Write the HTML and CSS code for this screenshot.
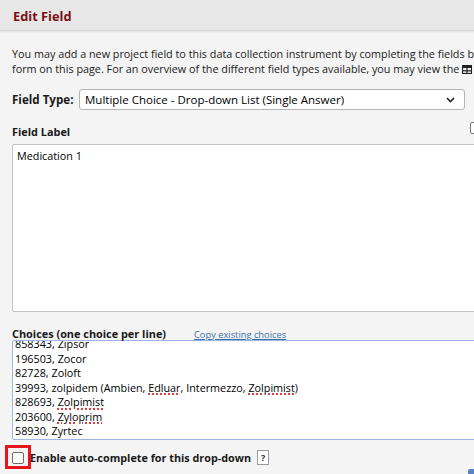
FILE: index.html
```html
<!DOCTYPE html>
<html>
<head>
<meta charset="utf-8">
<link rel="stylesheet" href="styles.css">
</head>
<body>
<div class="page">
  <div class="header"><span class="title">Edit Field</span></div>
  <div class="content">
    <p class="intro">You may add a new project field to this data collection instrument by completing the fields b<br>form on this page. For an overview of the different field types available, you may view the <span class="tblicon"><svg width="10" height="9" viewBox="0 0 10 9"><rect x="0.5" y="0.5" width="9" height="8" fill="none" stroke="#222" stroke-width="1.2"/><rect x="0.5" y="0.5" width="9" height="2.5" fill="#222"/><line x1="5" y1="3" x2="5" y2="8.5" stroke="#222" stroke-width="1.2"/><line x1="0.5" y1="5.8" x2="9.5" y2="5.8" stroke="#222" stroke-width="1.2"/></svg></span></p>
    <div class="typerow">
      <span class="typelabel">Field Type:</span>
      <div class="select"><span>Multiple Choice - Drop-down List (Single Answer)</span><svg class="chev" width="9" height="6" viewBox="0 0 9 6"><path d="M1 1 L4.5 4.5 L8 1" fill="none" stroke="#222" stroke-width="1.6"/></svg></div>
    </div>
    <div class="labelrow">
      <span class="boldlabel">Field Label</span>
      <span class="smallbox"></span>
    </div>
    <div class="textarea label-area">Medication 1</div>
    <div class="choicesrow">
      <span class="boldlabel">Choices (one choice per line)</span>
      <a class="copylink">Copy existing choices</a>
    </div>
    <div class="textarea choices-area">
      <div class="lines">
        <div>858343, Zipsor</div>
        <div>196503, Zocor</div>
        <div>82728, Zoloft</div>
        <div>39993, zolpidem (Ambien, <span class="sp">Edluar</span>, Intermezzo, <span class="sp">Zolpimist</span>)</div>
        <div>828693, <span class="sp">Zolpimist</span></div>
        <div>203600, <span class="sp">Zyloprim</span></div>
        <div>58930, Zyrtec</div>
      </div>
    </div>
    <div class="autorow">
      <span class="redbox"><span class="cb"></span></span>
      <span class="autotext">Enable auto-complete for this drop-down</span>
      <span class="help">?</span>
    </div>
  </div>
  <span class="corner"></span>
</div>
</body>
</html>
```
FILE: styles.css
```css
html, body {
  margin: 0;
  padding: 0;
  background: #f4f4f4;
  overflow: hidden;
}
.page {
  width: 474px;
  height: 474px;
  position: relative;
  overflow: hidden;
  font-family: "Open Sans", "Liberation Sans", sans-serif;
  color: #1a1a1a;
}
.header {
  height: 30px;
  background: #e7e7e7;
  border-bottom: 1px solid #d6d6d6;
  box-shadow: 0 1px 2px rgba(0,0,0,0.08);
  display: flex;
  align-items: center;
  padding-left: 13px;
}
.title {
  font-size: 12.8px;
  font-weight: 700;
  color: #7a0f14;
  margin-top: 1px;
}
.content {
  padding: 0 0 0 12px;
  width: 500px;
}
.intro {
  margin: 15px 0 0 0;
  font-size: 10.8px;
  line-height: 15px;
  white-space: nowrap;
  color: #1a1a1a;
}
.tblicon {
  display: inline-block;
  vertical-align: -1px;
}
.typerow {
  display: flex;
  align-items: center;
  margin-top: 12px;
  height: 21px;
}
.typelabel {
  font-size: 11.6px;
  font-weight: 700;
  width: 67px;
  white-space: nowrap;
}
.select {
  width: 370px;
  height: 19px;
  border: 1px solid #b5b5b5;
  border-radius: 3px;
  background: #fff;
  display: flex;
  align-items: center;
  justify-content: space-between;
  padding: 0 9px 0 5px;
  box-sizing: content-box;
  font-size: 11.5px;
  color: #000;
  white-space: nowrap;
}
.chev { margin-top: 1px; }
.labelrow {
  display: flex;
  justify-content: space-between;
  align-items: center;
  margin-top: 12px;
  width: 462px;
  height: 18px;
}
.boldlabel {
  font-size: 10.9px;
  font-weight: 700;
  color: #1a1a1a;
  white-space: nowrap;
}
.smallbox {
  width: 10px;
  height: 10px;
  border: 1px solid #777;
  border-radius: 2px;
  background: #fff;
  margin-right: -8px;
  margin-top: -7px;
}
.textarea {
  background: #fff;
  border: 1px solid #c4c4c4;
  border-radius: 2px;
  width: 480px;
  font-size: 10.8px;
  color: #000;
  box-sizing: border-box;
  overflow: hidden;
  white-space: nowrap;
}
.label-area {
  margin-top: 4px;
  height: 168px;
  padding: 3px 4px;
  line-height: 15px;
}
.choicesrow {
  display: flex;
  align-items: center;
  margin-top: 14px;
  height: 14px;
}
.copylink {
  margin-left: 28px;
  font-size: 9.3px;
  color: #3b6ea8;
  text-decoration: underline;
  margin-top: 2px;
  white-space: nowrap;
}
.choices-area {
  height: 100px;
  border: 1px solid #9fb6e4;
  padding: 0 2px;
  line-height: 14.5px;
}
.lines {
  margin-top: -4px;
}
.sp {
  text-decoration: underline dotted #e04040;
  text-underline-offset: 2px;
  text-decoration-thickness: 1.5px;
}
.autorow {
  display: flex;
  align-items: center;
  margin-top: 5px;
  margin-left: -7px;
  height: 24px;
}
.redbox {
  width: 20px;
  height: 18px;
  border: 3px solid #e8141c;
  display: flex;
  align-items: center;
  justify-content: center;
  position: relative;
  z-index: 1;
}
.cb {
  width: 10px;
  height: 10px;
  border: 1px solid #6b6b6b;
  border-radius: 2px;
  background: #fff;
  margin-top: 1px;
}
.autotext {
  font-size: 10.8px;
  font-weight: 700;
  color: #1a1a1a;
  margin-left: -1px;
  white-space: nowrap;
}
.help {
  margin-left: 6px;
  width: 10px;
  height: 13px;
  border: 1px solid #999;
  background: #fff;
  font-size: 9px;
  font-weight: 700;
  color: #333;
  display: flex;
  align-items: center;
  justify-content: center;
}
.corner {
  position: absolute;
  right: 0;
  bottom: 0;
  width: 6px;
  height: 5px;
  background: #5b82c9;
  border-radius: 2px 0 0 0;
}
```
